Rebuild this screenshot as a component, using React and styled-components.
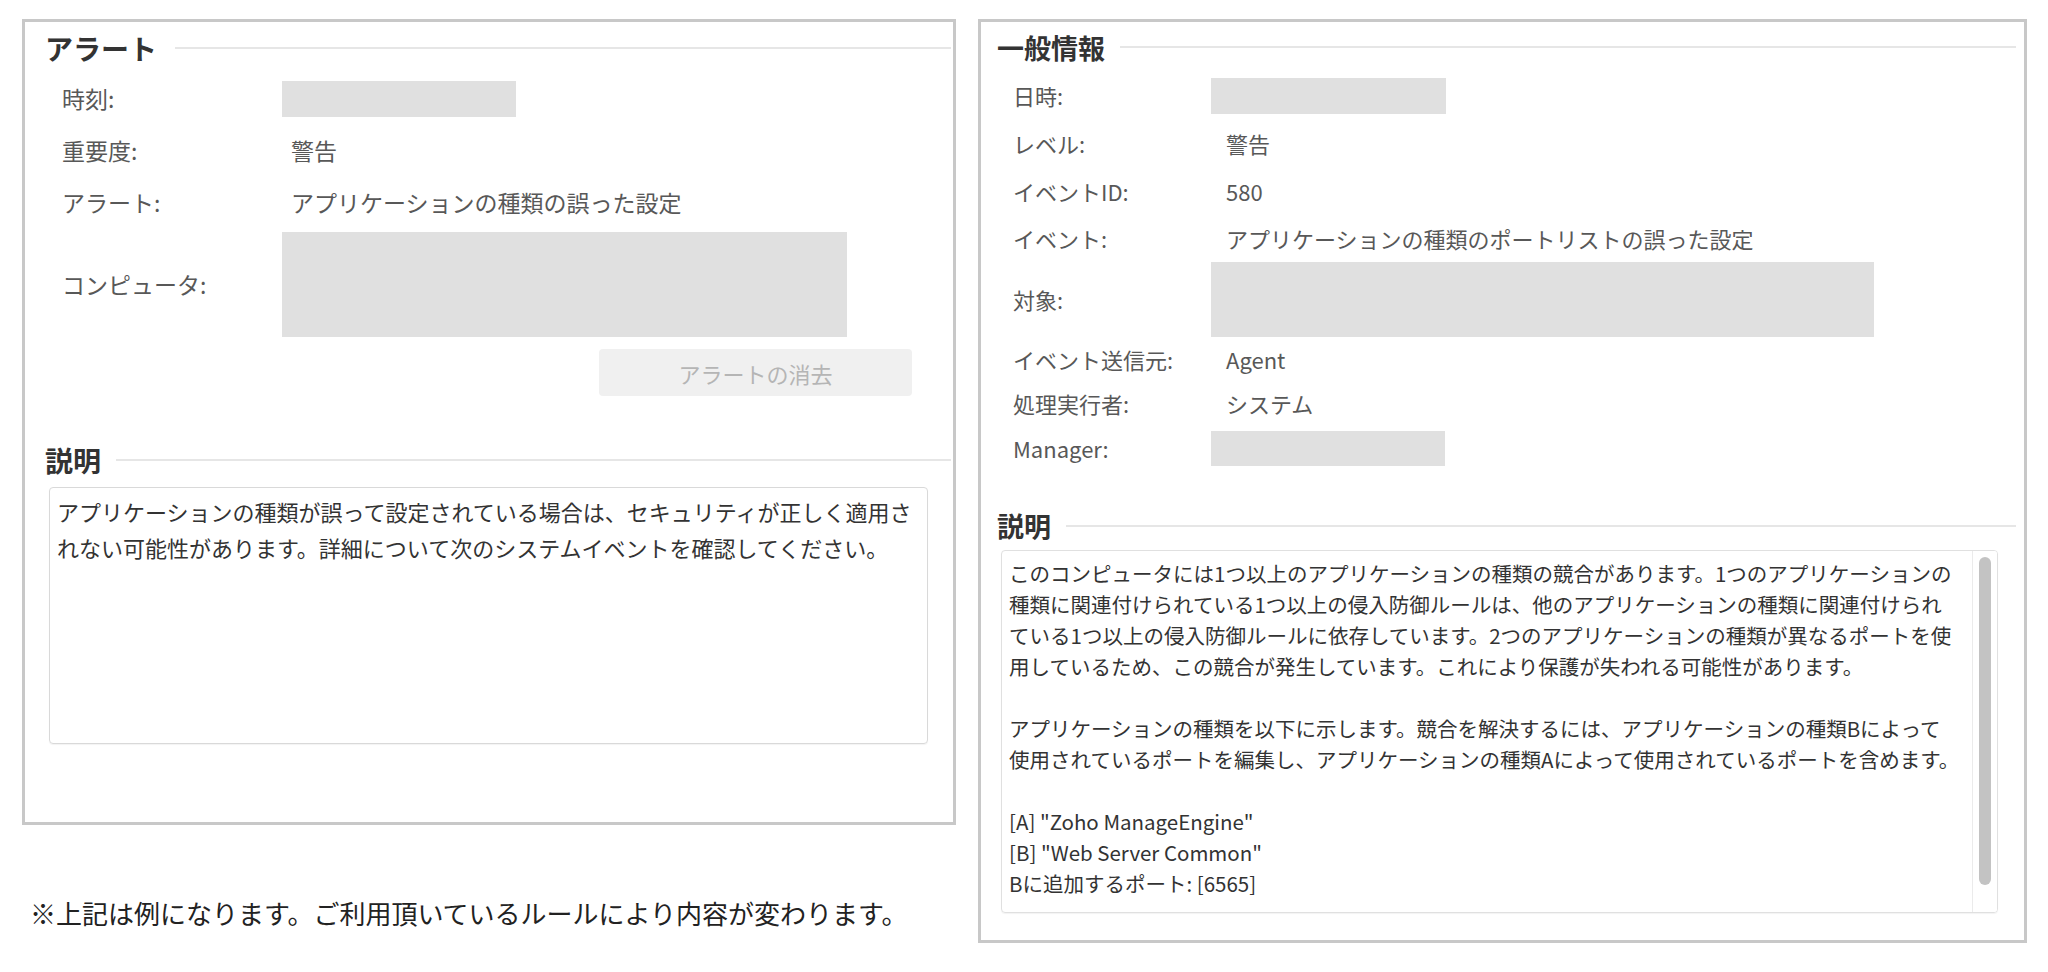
import React from 'react';
import styled, { createGlobalStyle } from 'styled-components';

const Global = createGlobalStyle`
  html, body { margin: 0; padding: 0; background: #fff; }
  body { font-family: "Noto Sans CJK JP", "Noto Sans", sans-serif; color: #333; }
  * { box-sizing: border-box; }
`;

const Page = styled.div`
  display: flex;
  align-items: flex-start;
  gap: 22px;
  padding: 19px 0 0 22px;
  width: 2048px;
  height: 972px;
  overflow: hidden;
`;

const LeftColumn = styled.div`
  display: flex;
  flex-direction: column;
  width: 934px;
`;

const Panel = styled.section`
  width: ${p => p.$w}px;
  border: 3px solid #c8c8c8;
  background: #fff;
  display: flex;
  flex-direction: column;
  padding-bottom: ${p => p.$pb}px;
`;

const SectionHeader = styled.div`
  display: flex;
  align-items: center;
  gap: ${p => p.$gap}px;
  height: ${p => p.$h}px;
  margin-top: ${p => p.$mt || 0}px;
  padding: 0 ${p => p.$pr}px 0 ${p => p.$pl}px;
`;

const SectionTitle = styled.h2`
  margin: 0;
  font-size: ${p => p.$fs}px;
  font-weight: 700;
  color: #333;
  line-height: 1;
  white-space: nowrap;
`;

const Rule = styled.div`
  flex: 1;
  height: 2px;
  background: #e6e6e6;
`;

const Field = styled.div`
  display: flex;
  align-items: center;
  height: ${p => p.$h}px;
  margin-top: ${p => p.$mt || 0}px;
  padding-left: ${p => p.$pl}px;
  font-size: ${p => p.$fs}px;
  color: #585858;
  line-height: 1.2;
`;

const Label = styled.div`
  width: ${p => p.$w}px;
  flex-shrink: 0;
  white-space: nowrap;
`;

const Value = styled.div`
  padding-left: ${p => p.$inset}px;
  white-space: nowrap;
`;

const Redacted = styled.div`
  width: ${p => p.$w}px;
  height: ${p => p.$h}px;
  background: #e0e0e0;
`;

const ButtonRow = styled.div`
  display: flex;
  justify-content: flex-end;
  margin-top: 12px;
  padding-right: 41px;
`;

const ClearButton = styled.button`
  width: 313px;
  height: 47px;
  border: none;
  border-radius: 4px;
  background: #f0f0f0;
  color: #b5b5b5;
  font-family: inherit;
  font-size: 22px;
  padding: 0;
  cursor: default;
`;

const TextBox = styled.div`
  display: flex;
  height: ${p => p.$h}px;
  margin: ${p => p.$margin};
  border: 1px solid ${p => p.$bc};
  border-radius: 4px;
  box-shadow: 0 1px 1px rgba(0, 0, 0, 0.05);
  overflow: hidden;
`;

const TextContent = styled.div`
  flex: 1;
  min-width: 0;
  padding: ${p => p.$pad};
  font-size: ${p => p.$fs}px;
  line-height: ${p => p.$lh}px;
  color: #333;
  white-space: pre;
  overflow: hidden;
`;

const ScrollTrack = styled.div`
  width: 25px;
  flex-shrink: 0;
  border-left: 1px solid #ebebeb;
  padding: 6px 6px 0 6px;
  background: #fff;
`;

const ScrollThumb = styled.div`
  width: 12px;
  height: ${p => p.$h}px;
  border-radius: 6px;
  background: #c3c3c3;
`;

const Footnote = styled.p`
  margin: 70px 0 0;
  padding-left: 8px;
  font-size: 26px;
  line-height: 36px;
  color: #222;
  white-space: nowrap;
`;

const leftDesc = `アプリケーションの種類が誤って設定されている場合は、セキュリティが正しく適用さ
れない可能性があります。詳細について次のシステムイベントを確認してください。`;

const rightDesc = `このコンピュータには1つ以上のアプリケーションの種類の競合があります。1つのアプリケーションの
種類に関連付けられている1つ以上の侵入防御ルールは、他のアプリケーションの種類に関連付けられ
ている1つ以上の侵入防御ルールに依存しています。2つのアプリケーションの種類が異なるポートを使
用しているため、この競合が発生しています。これにより保護が失われる可能性があります。

アプリケーションの種類を以下に示します。競合を解決するには、アプリケーションの種類Bによって
使用されているポートを編集し、アプリケーションの種類Aによって使用されているポートを含めます。

[A] "Zoho ManageEngine"
[B] "Web Server Common"
Bに追加するポート: [6565]`;

const leftFields = [
  { label: '時刻:', h: 50, block: { w: 234, h: 36 } },
  { label: '重要度:', h: 54, value: '警告' },
  { label: 'アラート:', h: 50, value: 'アプリケーションの種類の誤った設定' },
  { label: 'コンピュータ:', h: 105, mt: 4, block: { w: 565, h: 105 } },
];

const rightFields = [
  { label: '日時:', h: 47, block: { w: 235, h: 36 } },
  { label: 'レベル:', h: 48, value: '警告' },
  { label: 'イベントID:', h: 48, value: '580' },
  { label: 'イベント:', h: 46, value: 'アプリケーションの種類のポートリストの誤った設定' },
  { label: '対象:', h: 76, block: { w: 663, h: 75 } },
  { label: 'イベント送信元:', h: 44, value: 'Agent' },
  { label: '処理実行者:', h: 44, value: 'システム' },
  { label: 'Manager:', h: 46, block: { w: 234, h: 35 } },
];

function Fields({ items, pl, labelW, fs, inset }) {
  return items.map(f => (
    <Field key={f.label} $h={f.h} $mt={f.mt} $pl={pl} $fs={fs}>
      <Label $w={labelW}>{f.label}</Label>
      {f.block ? (
        <Redacted $w={f.block.w} $h={f.block.h} />
      ) : (
        <Value $inset={inset}>{f.value}</Value>
      )}
    </Field>
  ));
}

export default function App() {
  return (
    <>
      <Global />
      <Page>
        <LeftColumn>
          <Panel $w={934} $pb={78}>
            <SectionHeader $h={52} $pl={20} $pr={2} $gap={18}>
              <SectionTitle $fs={28}>アラート</SectionTitle>
              <Rule />
            </SectionHeader>
            <Fields items={leftFields} pl={37} labelW={220} fs={23} inset={9} />
            <ButtonRow>
              <ClearButton type="button">アラートの消去</ClearButton>
            </ButtonRow>
            <SectionHeader $h={52} $mt={38} $pl={20} $pr={2} $gap={15}>
              <SectionTitle $fs={28}>説明</SectionTitle>
              <Rule />
            </SectionHeader>
            <TextBox $h={257} $margin="1px 25px 0 24px" $bc="#d9d9d9">
              <TextContent $pad="5px 7px" $fs={22} $lh={36}>
                {leftDesc}
              </TextContent>
            </TextBox>
          </Panel>
          <Footnote>※上記は例になります。ご利用頂いているルールにより内容が変わります。</Footnote>
        </LeftColumn>

        <Panel $w={1049} $pb={27}>
          <SectionHeader $h={50} $pl={16} $pr={8} $gap={15}>
            <SectionTitle $fs={27}>一般情報</SectionTitle>
            <Rule />
          </SectionHeader>
          <Fields items={rightFields} pl={32} labelW={198} fs={22} inset={15} />
          <SectionHeader $h={49} $mt={30} $pl={16} $pr={8} $gap={15}>
            <SectionTitle $fs={27}>説明</SectionTitle>
            <Rule />
          </SectionHeader>
          <TextBox $h={363} $margin="0 26px 0 20px" $bc="#e0e0e0">
            <TextContent $pad="7px 0 0 7px" $fs={20.5} $lh={31}>
              {rightDesc}
            </TextContent>
            <ScrollTrack>
              <ScrollThumb $h={328} />
            </ScrollTrack>
          </TextBox>
        </Panel>
      </Page>
    </>
  );
}
